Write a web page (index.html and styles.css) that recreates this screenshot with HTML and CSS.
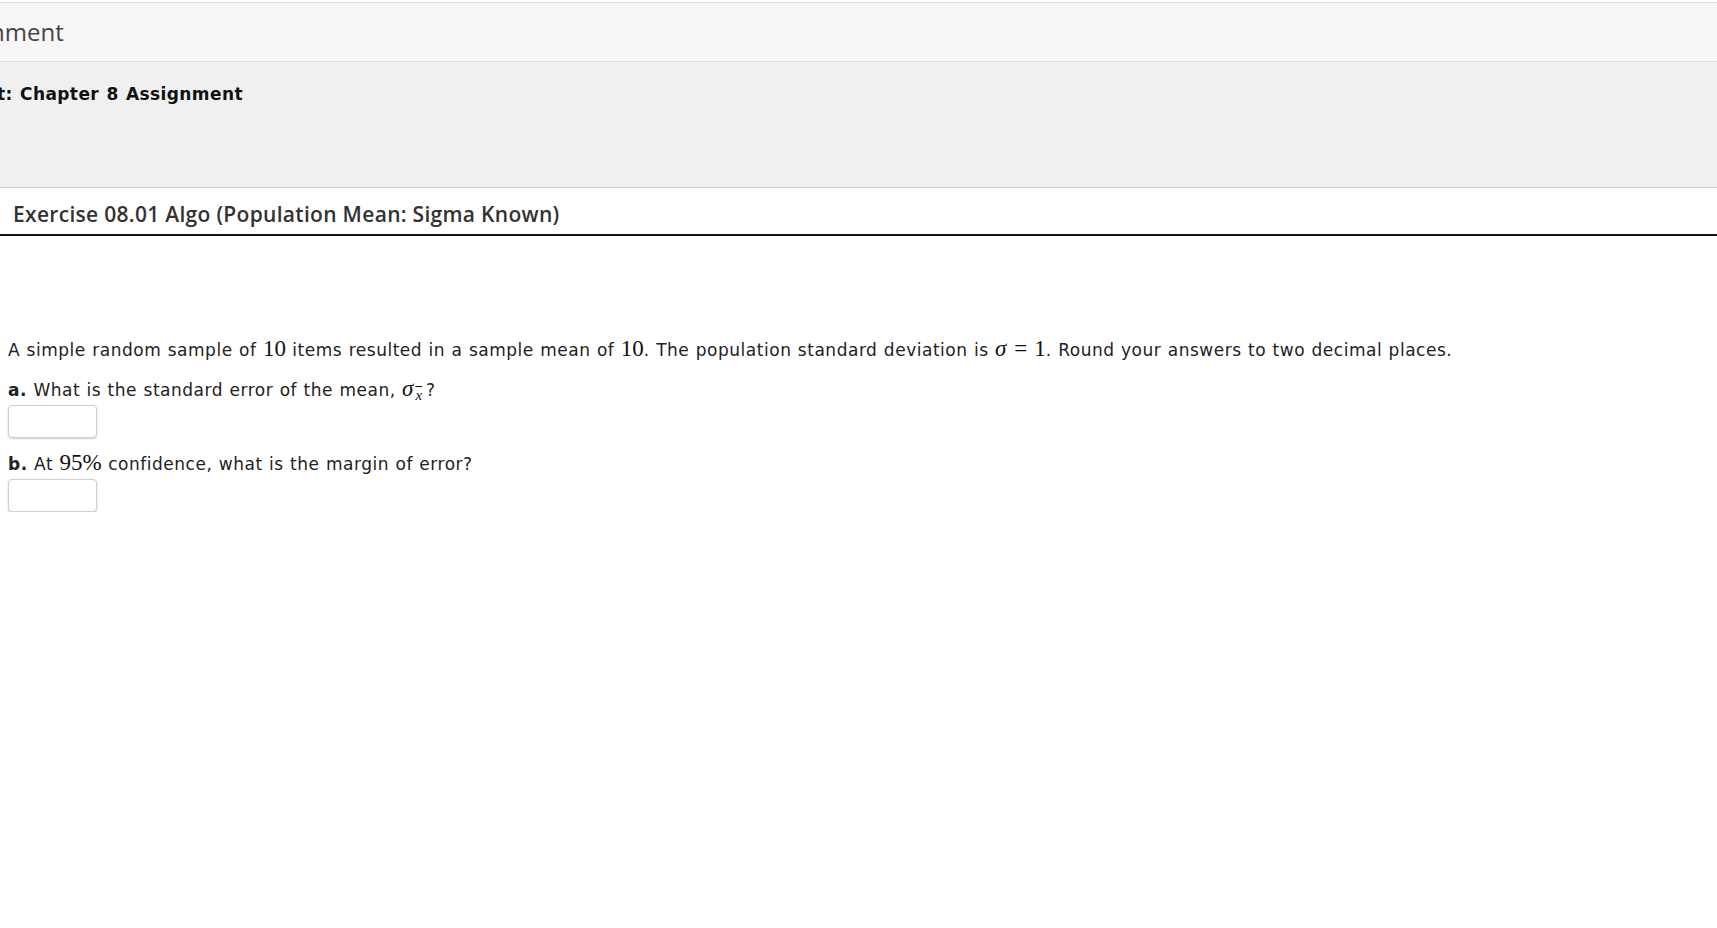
FILE: index.html
```html
<!DOCTYPE html>
<html lang="en">
<head>
<meta charset="utf-8">
<title>Chapter 8 Assignment</title>
<link rel="stylesheet" href="styles.css">
</head>
<body>
<div class="page">
  <header class="topbar">
    <span class="topbar-title">nment</span>
  </header>
  <section class="assignment-bar">
    <span class="assignment-name">t: Chapter 8 Assignment</span>
  </section>
  <div class="exercise-head">
    <h1 class="exercise-title">Exercise 08.01 Algo (Population Mean: Sigma Known)</h1>
  </div>
  <main class="question">
    <p class="line intro">A simple random sample of <span class="math num">10</span> items resulted in a sample mean of <span class="math num">10</span>. The population standard deviation is <span class="math"><i class="mi">σ</i><span class="mo">=</span><span class="num">1</span></span>. Round your answers to two decimal places.</p>
    <p class="line"><b>a.</b> What is the standard error of the mean, <span class="math"><i class="mi">σ</i><sub class="msub"><span class="xbar">x</span></sub></span>?</p>
    <div class="answer-row"><input class="answer" type="text" aria-label="Answer a"></div>
    <p class="line"><b>b.</b> At <span class="math num">95%</span> confidence, what is the margin of error?</p>
    <div class="answer-row"><input class="answer" type="text" aria-label="Answer b"></div>
  </main>
</div>
</body>
</html>
```
FILE: styles.css
```css
html, body {
  margin: 0;
  padding: 0;
  background: #ffffff;
}

.page {
  padding-top: 2px;
  overflow: hidden;
}

.topbar {
  border-top: 1px solid #dcdcdc;
  border-bottom: 1px solid #dcdcdc;
  background: #f7f7f7;
  padding-top: 12px;
  box-sizing: border-box;
  height: 60px;
}

.topbar-title {
  display: block;
  margin-left: -10px;
  font-family: "Open Sans", sans-serif;
  font-size: 24px;
  line-height: 33px;
  color: #444444;
  white-space: nowrap;
}

.assignment-bar {
  background: #f0f0f0;
  border-bottom: 1px solid #cccccc;
  height: 126px;
  box-sizing: border-box;
  padding-top: 23px;
}

.assignment-name {
  display: block;
  margin-left: -3px;
  font-family: "DejaVu Sans", Verdana, sans-serif;
  font-weight: bold;
  font-size: 17px;
  line-height: 19px;
  letter-spacing: 0.4px;
  word-spacing: 1px;
  color: #111111;
  white-space: nowrap;
}

.exercise-head {
  border-bottom: 2px solid #111111;
  height: 48px;
  box-sizing: border-box;
  padding: 12px 0 0 13px;
}

.exercise-title {
  margin: 0;
  font-family: "Open Sans", sans-serif;
  font-weight: 600;
  font-size: 21px;
  line-height: 29px;
  letter-spacing: 0.3px;
  color: #333333;
}

.question {
  padding: 104px 8px 0 8px;
  font-family: "DejaVu Sans", Verdana, sans-serif;
  font-size: 17px;
  letter-spacing: 0.52px;
  word-spacing: 0.5px;
  color: #222222;
}

.line {
  margin: 0;
  line-height: 20px;
  white-space: nowrap;
}

.intro {
  margin-bottom: 20px;
}

.math {
  font-family: "Liberation Serif", "Times New Roman", serif;
  font-size: 23px;
  line-height: 0;
  letter-spacing: 0;
  word-spacing: 0;
  color: #111111;
}

.mi {
  font-style: italic;
  padding-right: 1px;
}

.mo {
  padding: 0 7px;
}

.msub {
  font-size: 15px;
  line-height: 0;
  vertical-align: -4px;
  font-style: italic;
  margin-left: 1px;
  margin-right: 4px;
}

.xbar {
  text-decoration: overline;
}

.answer-row {
  padding: 5px 0 16px 0;
}

.answer-row:last-child {
  padding-bottom: 0;
}

.answer {
  display: block;
  box-sizing: border-box;
  width: 89px;
  height: 33px;
  margin: 0;
  border: 1px solid #cfcfcf;
  border-radius: 4px;
  background: #ffffff;
  box-shadow: 0 1px 2px rgba(0, 0, 0, 0.18);
  padding: 0 6px;
  font-family: "DejaVu Sans", Verdana, sans-serif;
  font-size: 16px;
}
```
